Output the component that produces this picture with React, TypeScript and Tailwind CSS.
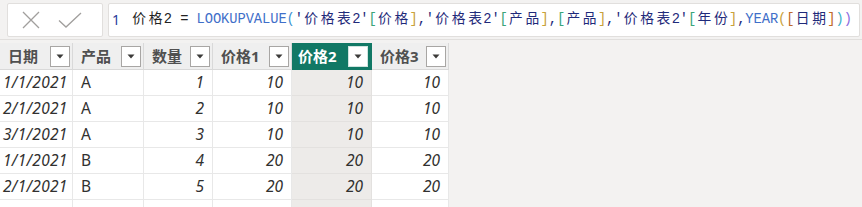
import React from "react";

type Tok = [string, string];

const tokens: Tok[] = [
  ["价格2 = ", "#222222"],
  ["LOOKUPVALUE", "#3f6fc9"],
  ["(", "#3a8fd0"],
  ["'价格表2'", "#1f2a7a"],
  ["[", "#3aa57a"],
  ["价格", "#1f2a7a"],
  ["]", "#c8a23a"],
  [",", "#1f2a7a"],
  ["'价格表2'", "#1f2a7a"],
  ["[", "#3aa57a"],
  ["产品", "#1f2a7a"],
  ["]", "#c8a23a"],
  [",", "#1f2a7a"],
  ["[", "#3aa57a"],
  ["产品", "#1f2a7a"],
  ["]", "#c8a23a"],
  [",", "#1f2a7a"],
  ["'价格表2'", "#1f2a7a"],
  ["[", "#3aa57a"],
  ["年份", "#1f2a7a"],
  ["]", "#c8a23a"],
  [",", "#1f2a7a"],
  ["YEAR", "#3f6fc9"],
  ["(", "#c8a23a"],
  ["[", "#c06a2a"],
  ["日期", "#1f2a7a"],
  ["]", "#c06a2a"],
  [")", "#3ab0c8"],
  [")", "#8a6ae0"],
];

const isCJK = (c: string) => /[\u3400-\u9fff]/.test(c);

function Code() {
  const out: React.ReactNode[] = [];
  let k = 0;
  tokens.forEach(([t, color]) => {
    for (const ch of t) {
      if (isCJK(ch)) {
        out.push(
          <span
            key={k++}
            className="inline-block w-[16.4px] text-center"
            style={{ color }}
          >
            {ch}
          </span>
        );
      } else {
        out.push(
          <span
            key={k++}
            className="inline-block w-[8.2px] text-center whitespace-pre"
            style={{ color }}
          >
            {ch}
          </span>
        );
      }
    }
  });
  return <>{out}</>;
}

const cols = ["日期", "产品", "数量", "价格1", "价格2", "价格3"];

const rows: [string, string, string, string, string, string][] = [
  ["1/1/2021", "A", "1", "10", "10", "10"],
  ["2/1/2021", "A", "2", "10", "10", "10"],
  ["3/1/2021", "A", "3", "10", "10", "10"],
  ["1/1/2021", "B", "4", "20", "20", "20"],
  ["2/1/2021", "B", "5", "20", "20", "20"],
  ["", "", "", "", "", ""],
];

function Caret() {
  return (
    <svg width="8" height="5" viewBox="0 0 8 5">
      <path d="M0.5 0.5 L7.5 0.5 L4 4.5 Z" fill="#3b3a39" />
    </svg>
  );
}

export default function App() {
  return (
    <div className="w-[862px] h-[207px] overflow-hidden bg-[#f3f2f1] font-['Noto_Sans','Noto_Sans_CJK_SC',sans-serif]">
      {/* formula bar */}
      <div className="flex h-[40px] gap-[5px] pl-[7px] pr-[2px] pt-[3px] border-b border-[#e1dfdd]">
        <div className="w-[96px] h-[34px] bg-white border border-[#e1dfdd] rounded-[2px] flex items-center pl-[14px] gap-[18px]">
          <svg width="18" height="18" viewBox="0 0 18 18">
            <path d="M1 1 L17 17 M17 1 L1 17" stroke="#a19f9d" strokeWidth="1.3" fill="none" />
          </svg>
          <svg width="24" height="16" viewBox="0 0 24 16">
            <path d="M1 8.5 L8 15 L23 1" stroke="#a19f9d" strokeWidth="1.3" fill="none" />
          </svg>
        </div>
        <div className="flex-1 h-[34px] bg-white border border-[#e1dfdd] rounded-[2px] flex items-center pl-[2px] font-['Liberation_Mono','Noto_Sans_CJK_SC',monospace] text-[13.75px] leading-none">
          <span className="inline-block w-[20px] pl-[1px] text-[#2b3a9a] font-['Noto_Sans',sans-serif] text-[14px]">1</span>
          <span className="whitespace-nowrap font-['Liberation_Mono','Noto_Sans_CJK_SC',monospace]">
            <Code />
          </span>
        </div>
      </div>

      {/* table */}
      <div className="pt-[3px]">
        <div className="grid grid-cols-[73px_71px_69px_79px_80px_77px] w-[449px] border-r border-[#dcdcdc] bg-white">
          {cols.map((c, i) => {
            const active = i === 4;
            return (
              <div
                key={c}
                className={
                  active
                    ? "h-[27px] flex items-center justify-between pl-[6px] pr-[3px] bg-[#117865] border-r border-b border-[#117865]"
                    : "h-[27px] flex items-center justify-between pl-[8px] pr-[2px] bg-[#efefef] border-r border-b border-[#d9d9d9]"
                }
              >
                <span
                  className={
                    active
                      ? "text-[15px] font-bold text-white font-['Noto_Sans','Noto_Sans_CJK_SC',sans-serif]"
                      : "text-[15px] font-bold text-[#505050] font-['Noto_Sans','Noto_Sans_CJK_SC',sans-serif]"
                  }
                >
                  {c}
                </span>
                <span
                  className={
                    active
                      ? "w-[20px] h-[21px] bg-white border border-[#d0e4df] flex items-center justify-center"
                      : "w-[20px] h-[21px] bg-white border border-[#a8a6a4] flex items-center justify-center"
                  }
                >
                  <Caret />
                </span>
              </div>
            );
          })}
          {rows.map((r, ri) =>
            r.map((v, ci) => {
              const sel = ci === 4;
              const base = sel
                ? "h-[26px] flex items-center bg-[#edebe9] border-r border-b border-[#e3e1df] text-[15.5px] text-[#323130]"
                : "h-[26px] flex items-center bg-white border-r border-b border-[#e8e8e8] text-[15.5px] text-[#323130]";
              if (ci === 0)
                return (
                  <div key={ri + "-" + ci} className={base + " pl-[3px] italic tracking-[0.3px]"}>
                    {v}
                  </div>
                );
              if (ci === 1)
                return (
                  <div key={ri + "-" + ci} className={base + " pl-[8px]"}>
                    {v}
                  </div>
                );
              return (
                <div key={ri + "-" + ci} className={base + " justify-end pr-[8px] italic"}>
                  {v}
                </div>
              );
            })
          )}
        </div>
      </div>
    </div>
  );
}
